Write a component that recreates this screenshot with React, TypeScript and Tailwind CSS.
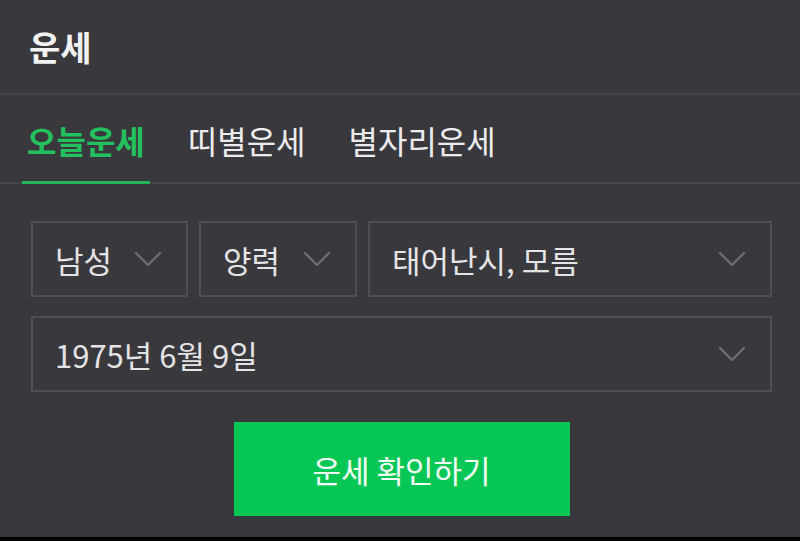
import React from "react";

const FONT = { fontFamily: '"Noto Sans CJK KR", "Noto Sans", sans-serif' };

function Chevron() {
    return (
        <svg width="28" height="16" viewBox="0 0 28 16" fill="none" className="shrink-0">
            <path d="M2 2 L14 14 L26 2" stroke="#6f6e73" strokeWidth="2.2" strokeLinecap="round" strokeLinejoin="round" />
        </svg>
    );
}

function SelectBox({ label, className }: { label: string; className: string }) {
    return (
        <div
            className={`flex h-[76px] items-center justify-between border-2 border-[#4f4e53] pl-[22px] pr-[24px] ${className}`}
        >
            <span className="text-[31px] leading-none text-[#e4e4e6]">{label}</span>
            <Chevron />
        </div>
    );
}

export default function App() {
    const tabs = ["오늘운세", "띠별운세", "별자리운세"];

    return (
        <div className="flex h-[541px] w-[800px] flex-col bg-[#39383d]" style={FONT}>
            {/* 헤더 */}
            <div className="flex h-[95px] items-center border-b-2 border-[#46454a] px-[29px]">
                <h1 className="text-[34px] font-bold leading-none text-[#f2f2f2]">운세</h1>
            </div>

            {/* 탭 */}
            <div className="flex h-[89px] items-stretch gap-[33px] border-b-2 border-[#46454a] pl-[22px]">
                {tabs.map((tab, i) => (
                    <div
                        key={tab}
                        className={`-mb-[2px] flex items-center px-[5px] pt-[4px] ${
                            i === 0 ? "border-b-[3px] border-[#23b45c]" : "border-b-[3px] border-transparent"
                        }`}
                    >
                        <span
                            className={`text-[32px] leading-none ${
                                i === 0 ? "font-bold text-[#22c05e]" : "font-normal text-[#ececee]"
                            }`}
                        >
                            {tab}
                        </span>
                    </div>
                ))}
            </div>

            {/* 선택 영역 */}
            <div className="flex flex-col pl-[31px] pr-[28px] pt-[37px]">
                <div className="flex gap-[11px]">
                    <SelectBox label="남성" className="w-[157px]" />
                    <SelectBox label="양력" className="w-[158px]" />
                    <SelectBox label="태어난시, 모름" className="flex-1" />
                </div>
                <div className="mt-[19px]">
                    <SelectBox label="1975년 6월 9일" className="w-full" />
                </div>
                <button className="mx-auto mt-[30px] flex h-[94px] w-[336px] items-center justify-center bg-[#06c755] text-[31px] leading-none text-[#f4fff7]">
                    운세 확인하기
                </button>
            </div>

            <div className="flex-1" />
            <div className="h-[4px] bg-black" />
        </div>
    );
}
